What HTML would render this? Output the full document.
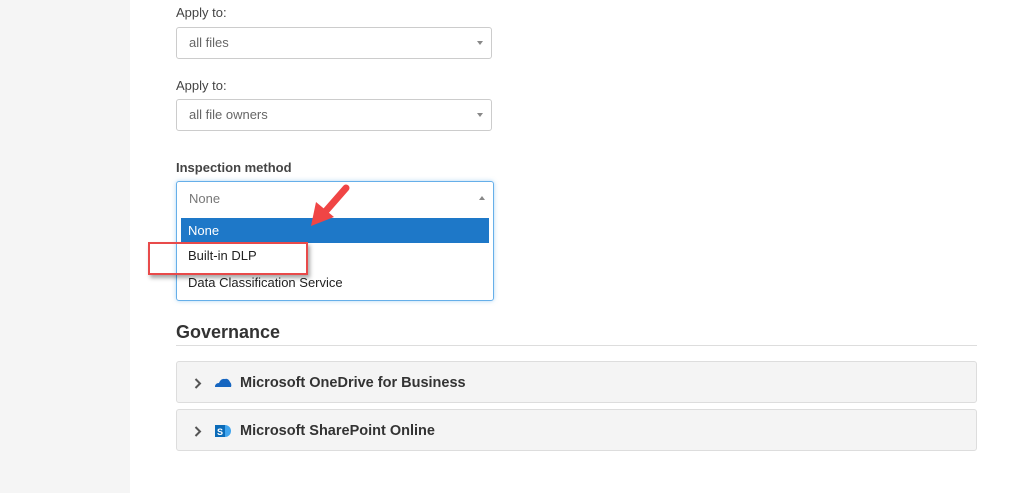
<!DOCTYPE html>
<html><head><style>
body{margin:0;width:1024px;height:493px;overflow:hidden;background:#fff;font-family:"Liberation Sans",sans-serif;position:relative}
.side{position:absolute;left:0;top:0;width:130px;height:493px;background:#f5f5f5}
.abs{position:absolute}
.lbl{font-size:13px;color:#444}
.sel{position:absolute;left:176px;width:316px;height:32px;border:1px solid #ccc;border-radius:3px;box-sizing:border-box;font-size:13px;color:#666;padding-left:12px;line-height:30px}
.sel:after{content:"";position:absolute;right:8px;top:13px;border-left:3px solid transparent;border-right:3px solid transparent;border-top:4px solid #888}
.panel{position:absolute;left:176px;width:801px;height:42px;background:#f4f4f4;border:1px solid #ddd;border-radius:3px;box-sizing:border-box;font-size:14.5px;font-weight:bold;color:#333;line-height:42px}
</style></head><body>
<div class="side"></div>
<div class="abs lbl" style="left:176px;top:5px">Apply to:</div>
<div class="sel" style="top:27px">all files</div>
<div class="abs lbl" style="left:176px;top:78px">Apply to:</div>
<div class="sel" style="top:99px">all file owners</div>
<div class="abs lbl" style="left:176px;top:160px;font-weight:bold;color:#444">Inspection method</div>
<div class="abs" style="left:176px;top:181px;width:318px;height:120px;border:1px solid #66afe9;border-radius:3px;box-sizing:border-box;box-shadow:0 0 4px rgba(102,175,233,.5)">
 <div style="font-size:13px;color:#777;padding-left:12px;line-height:34px">None</div>
 <div class="abs" style="right:8px;top:14px;border-left:3px solid transparent;border-right:3px solid transparent;border-bottom:4px solid #888"></div>
 <div class="abs" style="left:4px;top:36px;width:308px;height:25px;background:#1e78c8;color:#fff;font-size:13px;line-height:25px;padding-left:7px;box-sizing:border-box">None</div>
 <div class="abs" style="left:11px;top:66px;font-size:13px;color:#222">Built-in DLP</div>
 <div class="abs" style="left:11px;top:93px;font-size:13px;color:#222">Data Classification Service</div>
</div>
<div class="abs" style="left:148px;top:242px;width:160px;height:33px;border:2px solid #e84a4a;box-sizing:border-box;box-shadow:2px 3px 4px rgba(0,0,0,.35)"></div>
<svg class="abs" style="left:305px;top:180px" width="50" height="52"><path d="M41 8 L20 32" stroke="#f04545" stroke-width="7" stroke-linecap="round"/><path d="M6 46 L11 22 L29 37 Z" fill="#f04545"/></svg>
<div class="abs" style="left:176px;top:322px;font-size:18px;color:#333;font-weight:bold">Governance</div>
<div class="abs" style="left:176px;top:345px;width:801px;height:1px;background:#ddd"></div>
<div class="panel" style="top:361px"><svg class="abs" style="left:17px;top:16px" width="8" height="11"><path d="M1.5 1 L6 5.5 L1.5 10" stroke="#555" stroke-width="2" fill="none"/></svg>
<svg class="abs" style="left:37px;top:15px" width="18" height="11"><path d="M1 10 Q1 6 5 6 Q7 1 11 2 Q14 1 16 5 Q18 7 17 10 Z" fill="#1565c0"/></svg>
<span style="position:absolute;left:63px">Microsoft OneDrive for Business</span></div>
<div class="panel" style="top:409px"><svg class="abs" style="left:17px;top:16px" width="8" height="11"><path d="M1.5 1 L6 5.5 L1.5 10" stroke="#555" stroke-width="2" fill="none"/></svg>
<svg class="abs" style="left:37px;top:13px" width="18" height="16"><circle cx="11" cy="8" r="6" fill="#41a5ee"/><rect x="1" y="2" width="10" height="12" fill="#0b6bb8"/><text x="3" y="12" font-size="9" fill="#fff" font-family="Liberation Sans" font-weight="bold">S</text></svg>
<span style="position:absolute;left:63px">Microsoft SharePoint Online</span></div>
</body></html>
